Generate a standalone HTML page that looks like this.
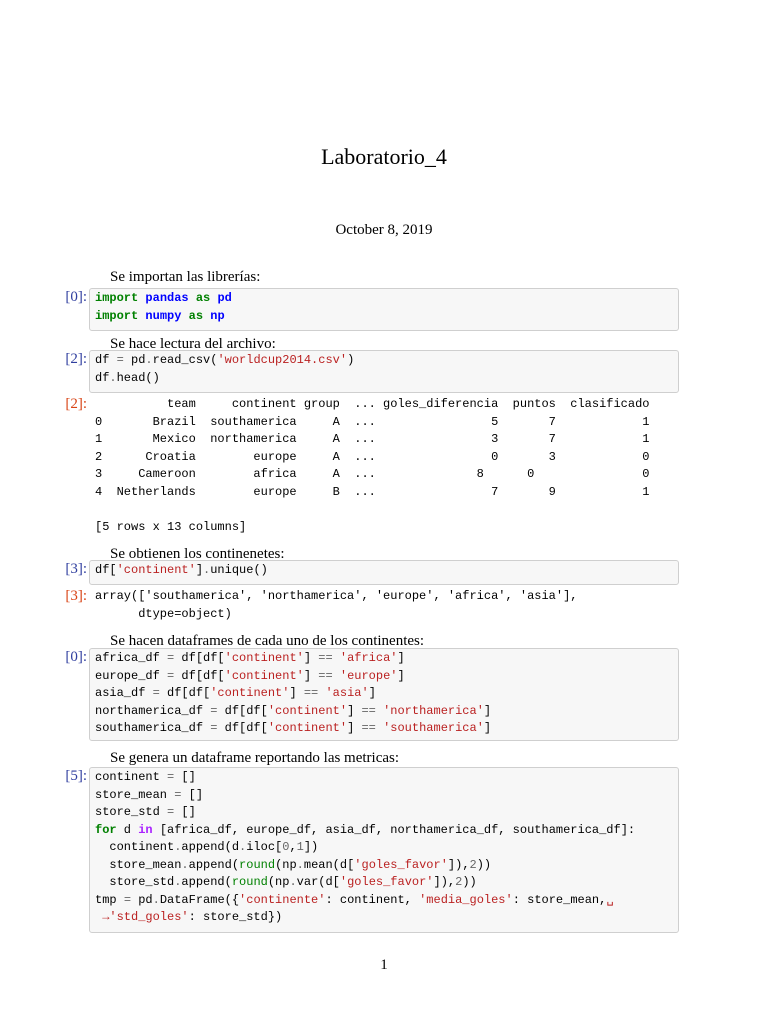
<!DOCTYPE html>
<html><head><meta charset="utf-8"><style>
body{margin:0;background:#fff;width:768px;height:1024px;position:relative;overflow:hidden;font-family:"Liberation Serif",serif;color:#000}
.t{position:absolute;white-space:nowrap}
.p{font-size:15px}
.box{position:absolute;left:89px;width:588px;background:#f7f7f7;border:1px solid #cfcfcf;border-radius:3px}
.c{position:absolute;left:95px;font-family:"Liberation Mono",monospace;font-size:12px;white-space:pre;line-height:17.5px}
.pi{position:absolute;right:681px;color:#303f9f;font-size:15px;white-space:nowrap}
.po{position:absolute;right:681px;color:#d84315;font-size:15px;white-space:nowrap}
.k{color:#008000;font-weight:bold}.n{color:#0000ff;font-weight:bold}.s{color:#ba2121}.o{color:#666}.m{color:#666}.b{color:#008000}.w{color:#aa22ff;font-weight:bold}
</style></head><body>
<div class="t" style="left:0;width:768px;text-align:center;top:144px;font-size:22px">Laboratorio_4</div>
<div class="t" style="left:0;width:768px;text-align:center;top:222px;font-size:15px">October 8, 2019</div>

<div class="t p" style="left:110px;top:269px">Se importan las librerías:</div>
<div class="pi" style="top:289px">[0]:</div>
<div class="box" style="top:288px;height:41px"></div>
<div class="c" style="top:290px"><span class="k">import</span> <span class="n">pandas</span> <span class="k">as</span> <span class="n">pd</span>
<span class="k">import</span> <span class="n">numpy</span> <span class="k">as</span> <span class="n">np</span></div>

<div class="t p" style="left:110px;top:336px">Se hace lectura del archivo:</div>
<div class="pi" style="top:351px">[2]:</div>
<div class="box" style="top:350px;height:41px"></div>
<div class="c" style="top:352px">df <span class="o">=</span> pd<span class="o">.</span>read_csv(<span class="s">'worldcup2014.csv'</span>)
df<span class="o">.</span>head()</div>

<div class="po" style="top:396px">[2]:</div>
<div class="c" style="top:396px">          team     continent group  ... goles_diferencia  puntos  clasificado
0       Brazil  southamerica     A  ...                5       7            1
1       Mexico  northamerica     A  ...                3       7            1
2      Croatia        europe     A  ...                0       3            0
3     Cameroon        africa     A  ...              8      0               0
4  Netherlands        europe     B  ...                7       9            1

[5 rows x 13 columns]</div>

<div class="t p" style="left:110px;top:546px">Se obtienen los continenetes:</div>
<div class="pi" style="top:561px">[3]:</div>
<div class="box" style="top:560px;height:23px"></div>
<div class="c" style="top:562px">df[<span class="s">'continent'</span>]<span class="o">.</span>unique()</div>

<div class="po" style="top:588px">[3]:</div>
<div class="c" style="top:588px">array(['southamerica', 'northamerica', 'europe', 'africa', 'asia'],
      dtype=object)</div>

<div class="t p" style="left:110px;top:633px">Se hacen dataframes de cada uno de los continentes:</div>
<div class="pi" style="top:649px">[0]:</div>
<div class="box" style="top:648px;height:91px"></div>
<div class="c" style="top:650px">africa_df <span class="o">=</span> df[df[<span class="s">'continent'</span>] <span class="o">==</span> <span class="s">'africa'</span>]
europe_df <span class="o">=</span> df[df[<span class="s">'continent'</span>] <span class="o">==</span> <span class="s">'europe'</span>]
asia_df <span class="o">=</span> df[df[<span class="s">'continent'</span>] <span class="o">==</span> <span class="s">'asia'</span>]
northamerica_df <span class="o">=</span> df[df[<span class="s">'continent'</span>] <span class="o">==</span> <span class="s">'northamerica'</span>]
southamerica_df <span class="o">=</span> df[df[<span class="s">'continent'</span>] <span class="o">==</span> <span class="s">'southamerica'</span>]</div>

<div class="t p" style="left:110px;top:750px">Se genera un dataframe reportando las metricas:</div>
<div class="pi" style="top:768px">[5]:</div>
<div class="box" style="top:767px;height:164px"></div>
<div class="c" style="top:769px">continent <span class="o">=</span> []
store_mean <span class="o">=</span> []
store_std <span class="o">=</span> []
<span class="k">for</span> d <span class="w">in</span> [africa_df, europe_df, asia_df, northamerica_df, southamerica_df]:
  continent<span class="o">.</span>append(d<span class="o">.</span>iloc[<span class="m">0</span>,<span class="m">1</span>])
  store_mean<span class="o">.</span>append(<span class="b">round</span>(np<span class="o">.</span>mean(d[<span class="s">'goles_favor'</span>]),<span class="m">2</span>))
  store_std<span class="o">.</span>append(<span class="b">round</span>(np<span class="o">.</span>var(d[<span class="s">'goles_favor'</span>]),<span class="m">2</span>))
tmp <span class="o">=</span> pd<span class="o">.</span>DataFrame({<span class="s">'continente'</span>: continent, <span class="s">'media_goles'</span>: store_mean,<span class="s">␣</span>
 <span class="s">→'std_goles'</span>: store_std})</div>

<div class="t" style="left:0;width:768px;text-align:center;top:957px;font-size:15px">1</div>
</body></html>
